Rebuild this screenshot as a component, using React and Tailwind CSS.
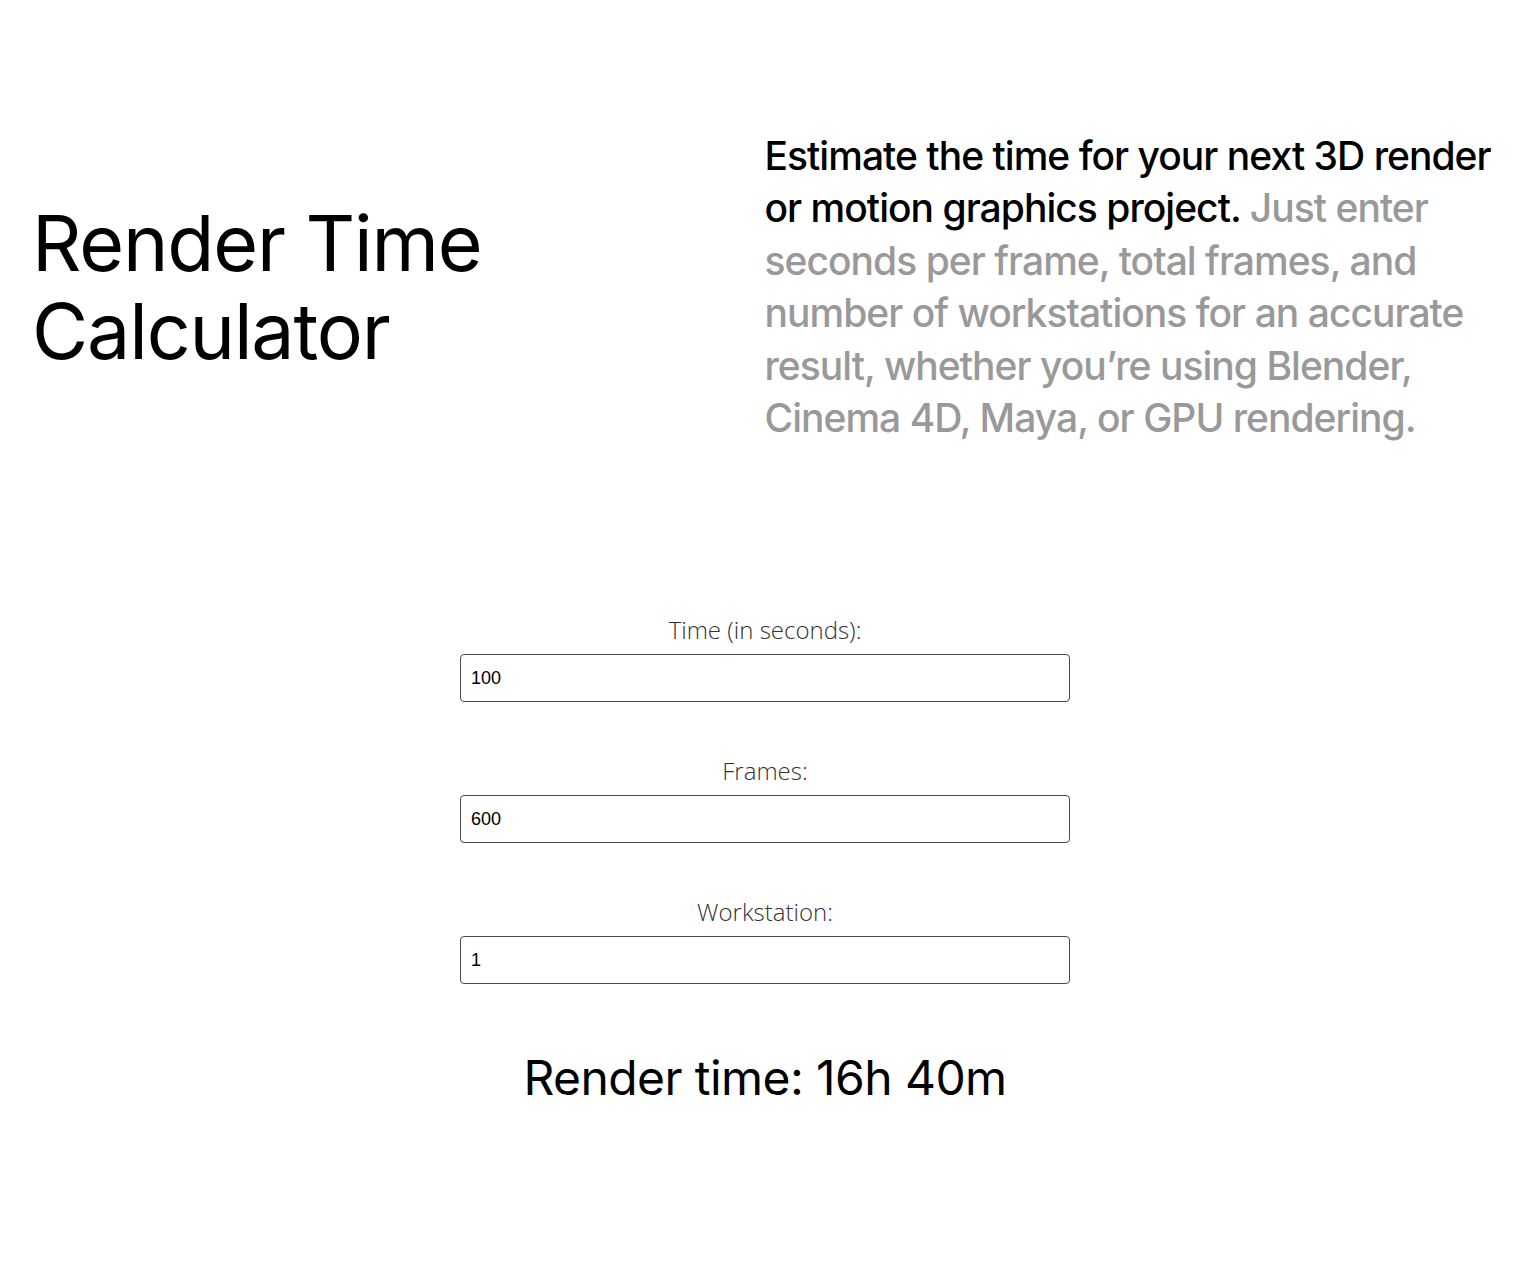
import React, { useState } from "react";

function Field({ label, value, onChange }) {
  return (
    <div className="flex flex-col items-center">
      <label
        className="text-[24px] leading-[32px] font-light text-[#333]"
        style={{ fontFamily: '"Open Sans", sans-serif' }}
      >
        {label}
      </label>
      <input
        type="text"
        value={value}
        onChange={(e) => onChange(e.target.value)}
        className="mt-[8px] w-[610px] h-[48px] rounded-[4px] border border-[#4a4a4a] px-[10px] text-[18px] text-black outline-none"
        style={{ fontFamily: '"Liberation Sans", Arial, sans-serif' }}
      />
    </div>
  );
}

export default function App() {
  const [t, setT] = useState("100");
  const [f, setF] = useState("600");
  const [w, setW] = useState("1");
  const total = ((parseFloat(t) || 0) * (parseFloat(f) || 0)) / (parseFloat(w) || 1);
  const h = Math.floor(total / 3600);
  const m = Math.floor((total % 3600) / 60);

  return (
    <div className="min-h-[1270px] bg-white">
      <div className="w-[1530px]" style={{ fontFamily: 'Inter, "Noto Sans", sans-serif' }}>
        <div className="grid grid-cols-2 items-center pl-[32px] pr-[35px] pt-[130px]">
          <h1 className="text-[77px] leading-[88px] font-normal text-black tracking-[-0.015em]">
            Render Time
            <br />
            Calculator
          </h1>
          <p className="pl-[1px] text-[39px] leading-[52.4px] font-[450] tracking-[-0.025em] text-[#999]">
            <span className="text-black">
              Estimate the time for your next 3D render or motion graphics project.
            </span>{" "}
            Just enter seconds per frame, total frames, and number of workstations for an
            accurate result, whether you’re using Blender, Cinema 4D, Maya, or GPU rendering.
          </p>
        </div>
        <div className="mt-[170px] flex flex-col items-center gap-[53px]">
          <Field label="Time (in seconds):" value={t} onChange={setT} />
          <Field label="Frames:" value={f} onChange={setF} />
          <Field label="Workstation:" value={w} onChange={setW} />
        </div>
        <div className="mt-[64px] text-center text-[48px] leading-[60px] text-black tracking-[-0.012em]">
          Render time: {h}h {m}m
        </div>
      </div>
    </div>
  );
}
